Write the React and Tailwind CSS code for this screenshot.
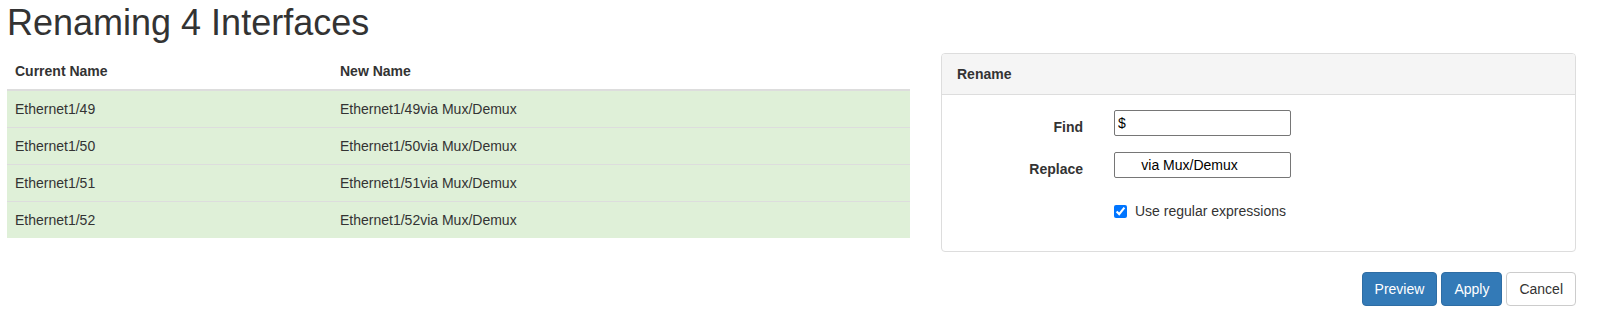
import React from 'react'

const rows = [
  ['Ethernet1/49', 'Ethernet1/49via Mux/Demux'],
  ['Ethernet1/50', 'Ethernet1/50via Mux/Demux'],
  ['Ethernet1/51', 'Ethernet1/51via Mux/Demux'],
  ['Ethernet1/52', 'Ethernet1/52via Mux/Demux'],
]

const FormRow = ({ label, value }) => (
  <div className="flex mb-[15px]">
    <label className="w-[126px] pt-[7px] text-right font-bold leading-[20px] text-[14px]">{label}</label>
    <div className="ml-[31px]">
      <input
        type="text"
        readOnly
        value={value}
        className="w-[177px] h-[26px] border border-[#767676] rounded-[2px] px-[3px] text-[14px] text-black bg-white outline-none whitespace-pre"
      />
    </div>
  </div>
)

export default function App() {
  return (
    <div className="min-h-screen bg-white text-[#333] text-[14px] leading-[20px] font-['Liberation_Sans',Arial,sans-serif]">
      <h1 className="mt-[3px] mb-[9px] pl-[7px] h-[40px] text-[36px] leading-[39.6px] font-normal">
        Renaming 4 Interfaces
      </h1>

      <div className="flex pl-[7px]">
        {/* Table */}
        <div className="w-[903px] mt-[1px]">
          <table className="w-full border-collapse">
            <thead>
              <tr>
                <th className="w-[325px] text-left font-bold p-[8px] border-b-2 border-[#ddd]">Current Name</th>
                <th className="text-left font-bold p-[8px] border-b-2 border-[#ddd]">New Name</th>
              </tr>
            </thead>
            <tbody>
              {rows.map(([cur, next], i) => (
                <tr key={cur} className="bg-[#dff0d8]">
                  <td className={`p-[8px] ${i > 0 ? 'border-t border-[#ddd]' : ''}`}>{cur}</td>
                  <td className={`p-[8px] ${i > 0 ? 'border-t border-[#ddd]' : ''}`}>{next}</td>
                </tr>
              ))}
            </tbody>
          </table>
        </div>

        {/* Rename panel */}
        <div className="ml-[31px] w-[635px] mt-[1px]">
          <div className="border border-[#ddd] rounded-[4px] mb-[20px]">
            <div className="bg-[#f5f5f5] border-b border-[#ddd] rounded-t-[3px] px-[15px] py-[10px] font-bold">
              Rename
            </div>
            <div className="p-[15px]">
              <FormRow label="Find" value="$" />
              <FormRow label="Replace" value="      via Mux/Demux" />
              <div className="flex mb-[15px]">
                <div className="w-[126px]" />
                <div className="ml-[31px] pt-[7px] min-h-[27px] flex items-start">
                  <input type="checkbox" defaultChecked className="w-[13px] h-[13px] mt-[4px] m-0" />
                  <span className="ml-[8px]">Use regular expressions</span>
                </div>
              </div>
            </div>
          </div>

          <div className="flex justify-end gap-[4px]">
            <button className="px-[12px] py-[6px] leading-[20px] border border-[#2e6da4] bg-[#337ab7] text-white rounded-[4px]">
              Preview
            </button>
            <button className="px-[12px] py-[6px] leading-[20px] border border-[#2e6da4] bg-[#337ab7] text-white rounded-[4px]">
              Apply
            </button>
            <button className="px-[12px] py-[6px] leading-[20px] border border-[#ccc] bg-white text-[#333] rounded-[4px]">
              Cancel
            </button>
          </div>
        </div>
      </div>
    </div>
  )
}
